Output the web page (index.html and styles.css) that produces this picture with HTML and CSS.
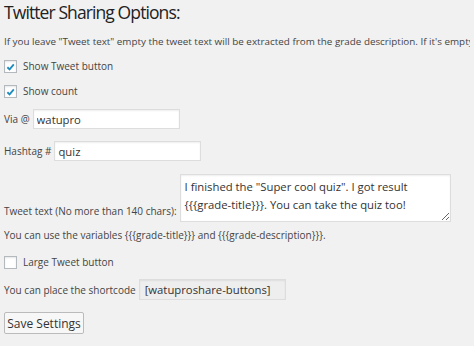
FILE: index.html
```html
<!DOCTYPE html>
<html lang="en">
<head>
    <meta charset="UTF-8">
    <meta name="viewport" content="width=device-width, initial-scale=1.0">
    <title>Twitter Sharing Options</title>
    <link rel="stylesheet" href="styles.css">
</head>
<body>
    <h2 class="title">Twitter Sharing Options:</h2>
    <p class="intro">If you leave "Tweet text" empty the tweet text will be extracted from the grade description. If it's empty the grade title will be used.</p>

    <label class="check first">
        <span class="box"><svg viewBox="0 0 12 12" width="12" height="12"><path d="M2.6 6.3 L5 8.6 L9.6 3.2" fill="none" stroke="#1e8cbe" stroke-width="2"/></svg></span>
        Show Tweet button
    </label>
    <label class="check second">
        <span class="box"><svg viewBox="0 0 12 12" width="12" height="12"><path d="M2.6 6.3 L5 8.6 L9.6 3.2" fill="none" stroke="#1e8cbe" stroke-width="2"/></svg></span>
        Show count
    </label>

    <div class="row via">
        <label for="via">Via @</label>
        <input type="text" id="via" class="field" value="watupro">
    </div>
    <div class="row hashtag">
        <label for="hashtag">Hashtag #</label>
        <input type="text" id="hashtag" class="field" value="quiz">
    </div>

    <div class="tweet-row">
        <label for="tweet" class="tweet-label">Tweet text (No more than 140 chars):</label>
        <textarea id="tweet" class="tweet-text">I finished the "Super cool quiz". I got result {{{grade-title}}}. You can take the quiz too!</textarea>
    </div>
    <p class="hint">You can use the variables {{{grade-title}}} and {{{grade-description}}}.</p>

    <label class="check third">
        <span class="box"></span>
        Large Tweet button
    </label>

    <div class="row shortcode">
        <span>You can place the shortcode</span>
        <input type="text" class="field readonly" value="[watuproshare-buttons]" readonly>
    </div>

    <button class="save">Save Settings</button>
</body>
</html>
```

FILE: styles.css
```css
body {
    margin: 0;
    padding: 0 4px;
    background-color: #f1f1f1;
    font-family: "Open Sans", sans-serif;
    font-size: 10px;
    color: #444;
    overflow: hidden;
}

.title {
    margin: 0;
    font-size: 17.5px;
    font-weight: 400;
    letter-spacing: -0.9px;
    line-height: 24px;
    color: #222;
}

.intro {
    margin: 9px 0 0;
    font-size: 9.85px;
    line-height: 16px;
    white-space: nowrap;
    overflow: hidden;
}

.check {
    display: flex;
    align-items: center;
    gap: 6px;
    height: 20px;
}

.check.first {
    margin-top: 7px;
}

.check.second {
    margin-top: 5px;
}

.check.third {
    margin-top: 9px;
}

.box {
    width: 11px;
    height: 11px;
    border: 1px solid #b4b9be;
    background: #fff;
    box-shadow: inset 0 1px 2px rgba(0, 0, 0, 0.1);
    display: flex;
}

.row {
    display: flex;
    align-items: center;
    gap: 3px;
}

.row.via {
    margin-top: 8px;
}

.row.hashtag {
    margin-top: 12px;
}

.row.shortcode {
    margin-top: 7px;
    gap: 3px;
}

.field {
    width: 147px;
    height: 20px;
    box-sizing: border-box;
    border: 1px solid #ddd;
    padding: 0 3px;
    font-family: "Open Sans", sans-serif;
    font-size: 11.3px;
    color: #333;
    background: #fff;
    box-shadow: inset 0 1px 2px rgba(0, 0, 0, 0.07);
}

.field.readonly {
    height: 21px;
    padding: 0 5px;
    background: #eee;
}

.tweet-row {
    display: flex;
    align-items: flex-end;
    gap: 3px;
    margin-top: 13px;
}

.tweet-label {
    margin-bottom: 4px;
}

.tweet-text {
    width: 271px;
    height: 48px;
    box-sizing: border-box;
    margin: 0;
    border: 1px solid #ddd;
    padding: 3px 4px;
    font-family: "Open Sans", sans-serif;
    font-size: 11.3px;
    line-height: 18px;
    color: #333;
    background: #fff;
    box-shadow: inset 0 1px 2px rgba(0, 0, 0, 0.07);
}

.hint {
    margin: 5px 0 0;
    line-height: 16px;
}

.save {
    display: block;
    margin-top: 12px;
    width: 80px;
    height: 22px;
    padding: 0;
    border: 1px solid #bbb;
    border-radius: 2px;
    background: #f7f7f7;
    font-family: "Open Sans", sans-serif;
    font-size: 12px;
    color: #333;
}
```
